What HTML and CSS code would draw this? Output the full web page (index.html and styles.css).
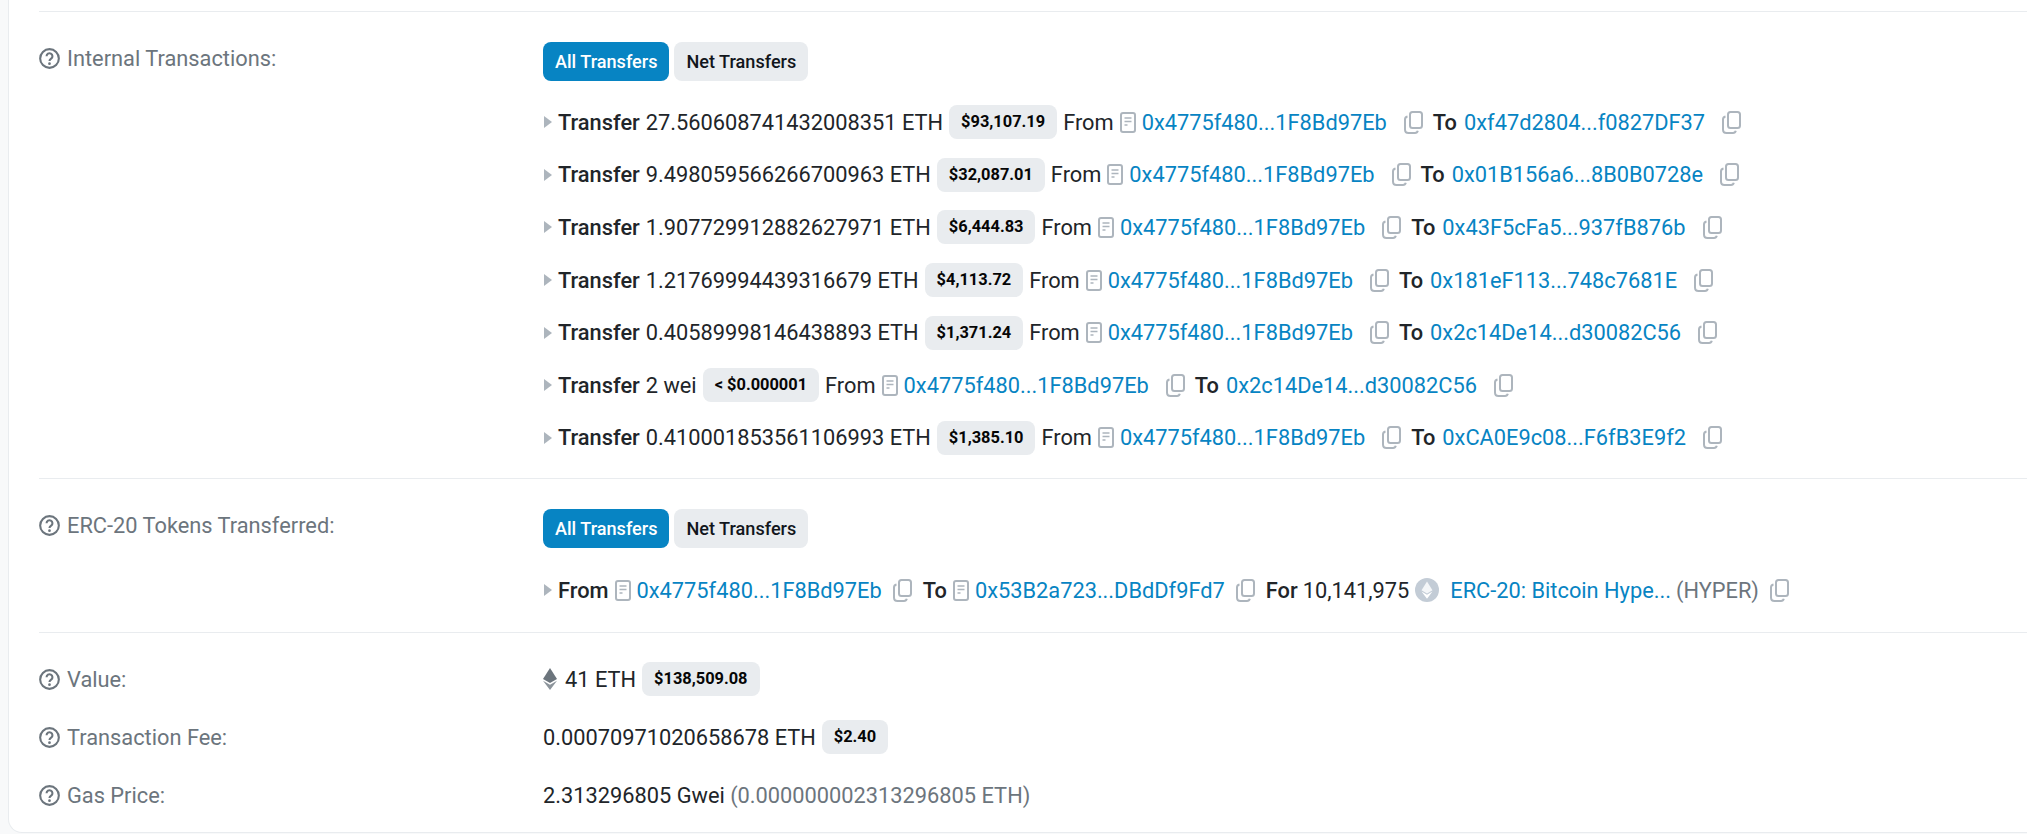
FILE: index.html
```html
<!DOCTYPE html>
<html lang="en">
<head>
  <meta charset="UTF-8" />
  <title>Transaction Details</title>
  <link rel="stylesheet" href="styles.css">
</head>
<body>
  <svg class="sprites" aria-hidden="true">
    <symbol id="i-help" viewBox="0 0 20 20">
      <circle cx="10" cy="10" r="8.9" fill="none" stroke="currentColor" stroke-width="2"/>
      <path d="M7.2 7.800a2.800 2.800 0 1 1 4.400 2.300c-1 .7-1.600 1.100-1.600 2.300" fill="none" stroke="currentColor" stroke-width="2"/>
      <circle cx="10" cy="14.900" r="1.300" fill="currentColor"/>
    </symbol>
    <symbol id="i-doc" viewBox="0 0 16 21">
      <rect x="1" y="1" width="14" height="19" rx="2" fill="none" stroke="currentColor" stroke-width="2"/>
      <path d="M4.500 6h7M4.500 9.500h7M4.500 13h3" fill="none" stroke="currentColor" stroke-width="1.500"/>
    </symbol>
    <symbol id="i-copy" viewBox="0 0 19 23">
      <rect x="6" y="1" width="12" height="16" rx="2.500" fill="none" stroke="currentColor" stroke-width="2"/>
      <path d="M3.500 5.500C2 5.800 1 6.800 1 8.500v10C1 20.500 2.500 22 4.500 22h6.500c1.500 0 2.500-1 2.800-2.200" fill="none" stroke="currentColor" stroke-width="2"/>
    </symbol>
    <symbol id="i-eth" viewBox="0 0 14 22">
      <path d="M7 0l7 11-7 4-7-4z" fill="#6c757d"/>
      <path d="M0 12.700l7 4 7-4-7 9.300z" fill="#8c949b"/>
    </symbol>
    <symbol id="i-token" viewBox="0 0 24 24">
      <circle cx="12" cy="12" r="12" fill="#c3ccd6"/>
      <path d="M12 3.500l5.500 8.700-5.500 3.200-5.500-3.200z" fill="#f4f6f8"/>
      <path d="M6.500 13.500l5.500 3.200 5.500-3.200-5.500 7.300z" fill="#ffffff"/>
    </symbol>
  </svg>

  <main class="card">
    <section class="row row-internal">
      <div class="label"><svg class="help"><use href="#i-help"/></svg>Internal Transactions:</div>
      <div class="value">
        <div class="tabs">
          <span class="tab active">All Transfers</span>
          <span class="tab">Net Transfers</span>
        </div>
        <ul class="transfers">
          <li><i class="caret"></i><b>Transfer</b><span class="qty">27.560608741432008351 ETH</span><span class="usd">$93,107.19</span><span>From</span><svg class="doc"><use href="#i-doc"/></svg><a href="#">0x4775f480...1F8Bd97Eb</a><svg class="copy"><use href="#i-copy"/></svg><b class="to">To</b><a href="#">0xf47d2804...f0827DF37</a><svg class="copy"><use href="#i-copy"/></svg></li>
          <li><i class="caret"></i><b>Transfer</b><span class="qty">9.498059566266700963 ETH</span><span class="usd">$32,087.01</span><span>From</span><svg class="doc"><use href="#i-doc"/></svg><a href="#">0x4775f480...1F8Bd97Eb</a><svg class="copy"><use href="#i-copy"/></svg><b class="to">To</b><a href="#">0x01B156a6...8B0B0728e</a><svg class="copy"><use href="#i-copy"/></svg></li>
          <li><i class="caret"></i><b>Transfer</b><span class="qty">1.907729912882627971 ETH</span><span class="usd">$6,444.83</span><span>From</span><svg class="doc"><use href="#i-doc"/></svg><a href="#">0x4775f480...1F8Bd97Eb</a><svg class="copy"><use href="#i-copy"/></svg><b class="to">To</b><a href="#">0x43F5cFa5...937fB876b</a><svg class="copy"><use href="#i-copy"/></svg></li>
          <li><i class="caret"></i><b>Transfer</b><span class="qty">1.21769994439316679 ETH</span><span class="usd">$4,113.72</span><span>From</span><svg class="doc"><use href="#i-doc"/></svg><a href="#">0x4775f480...1F8Bd97Eb</a><svg class="copy"><use href="#i-copy"/></svg><b class="to">To</b><a href="#">0x181eF113...748c7681E</a><svg class="copy"><use href="#i-copy"/></svg></li>
          <li><i class="caret"></i><b>Transfer</b><span class="qty">0.40589998146438893 ETH</span><span class="usd">$1,371.24</span><span>From</span><svg class="doc"><use href="#i-doc"/></svg><a href="#">0x4775f480...1F8Bd97Eb</a><svg class="copy"><use href="#i-copy"/></svg><b class="to">To</b><a href="#">0x2c14De14...d30082C56</a><svg class="copy"><use href="#i-copy"/></svg></li>
          <li><i class="caret"></i><b>Transfer</b><span class="qty">2 wei</span><span class="usd">&lt; $0.000001</span><span>From</span><svg class="doc"><use href="#i-doc"/></svg><a href="#">0x4775f480...1F8Bd97Eb</a><svg class="copy"><use href="#i-copy"/></svg><b class="to">To</b><a href="#">0x2c14De14...d30082C56</a><svg class="copy"><use href="#i-copy"/></svg></li>
          <li><i class="caret"></i><b>Transfer</b><span class="qty">0.410001853561106993 ETH</span><span class="usd">$1,385.10</span><span>From</span><svg class="doc"><use href="#i-doc"/></svg><a href="#">0x4775f480...1F8Bd97Eb</a><svg class="copy"><use href="#i-copy"/></svg><b class="to">To</b><a href="#">0xCA0E9c08...F6fB3E9f2</a><svg class="copy"><use href="#i-copy"/></svg></li>
        </ul>
      </div>
    </section>

    <section class="row row-tokens">
      <div class="label"><svg class="help"><use href="#i-help"/></svg>ERC-20 Tokens Transferred:</div>
      <div class="value">
        <div class="tabs">
          <span class="tab active">All Transfers</span>
          <span class="tab">Net Transfers</span>
        </div>
        <ul class="transfers">
          <li><i class="caret"></i><b>From</b><svg class="doc"><use href="#i-doc"/></svg><a href="#">0x4775f480...1F8Bd97Eb</a><svg class="copy copy-near"><use href="#i-copy"/></svg><b>To</b><svg class="doc"><use href="#i-doc"/></svg><a href="#">0x53B2a723...DBdDf9Fd7</a><svg class="copy copy-near"><use href="#i-copy"/></svg><b class="for">For</b><span>10,141,975</span><svg class="token"><use href="#i-token"/></svg><a href="#">ERC-20: Bitcoin Hype...</a><span class="muted symbol">(HYPER)</span><svg class="copy copy-near"><use href="#i-copy"/></svg></li>
        </ul>
      </div>
    </section>

    <section class="row row-plain">
      <div class="label"><svg class="help"><use href="#i-help"/></svg>Value:</div>
      <div class="line"><svg class="eth"><use href="#i-eth"/></svg><span>41 ETH</span><span class="usd">$138,509.08</span></div>
      <div class="label"><svg class="help"><use href="#i-help"/></svg>Transaction Fee:</div>
      <div class="line"><span>0.00070971020658678 ETH</span><span class="usd">$2.40</span></div>
      <div class="label"><svg class="help"><use href="#i-help"/></svg>Gas Price:</div>
      <div class="line"><span>2.313296805 Gwei <span class="muted">(0.000000002313296805 ETH)</span></span></div>
    </section>
  </main>
</body>
</html>
```

FILE: styles.css
```css
body {
  margin: 0;
  background-color: #f8f9fa;
  font-family: Roboto, "Liberation Sans", sans-serif;
  font-size: 21.8px;
  color: #212529;
}
.sprites {
  display: none;
}
.card {
  margin-left: 8px;
  height: 833px;
  box-sizing: border-box;
  padding: 11px 0 0 30px;
  background: white;
  border-left: 1px solid #e9ecef;
  border-bottom: 1px solid #e9ecef;
  border-bottom-left-radius: 14px;
}
.row {
  display: grid;
  grid-template-columns: 504px 1fr;
  border-top: 1px solid #e9ecef;
}
.row-internal {
  height: 467px;
  padding-top: 30px;
  box-sizing: border-box;
}
.row-tokens {
  height: 154px;
  padding-top: 30px;
  box-sizing: border-box;
}
.row-tokens .transfers {
  margin-top: 16px;
}
.row-plain {
  padding-top: 17px;
  grid-auto-rows: 58px;
  align-items: center;
}
.label {
  display: flex;
  align-items: center;
  gap: 7px;
  color: #6c757d;
  height: 33px;
}
.help {
  width: 21px;
  height: 21px;
  color: #6c757d;
}
.tabs {
  display: flex;
  gap: 5px;
}
.tab {
  padding: 0 12px;
  height: 39px;
  line-height: 39px;
  border-radius: 8px;
  background: #e9ecef;
  font-size: 18.1px;
  font-weight: 500;
  color: #12161c;
}
.tab.active {
  background: #0784c3;
  color: white;
}
.transfers {
  list-style: none;
  margin: 15px 0 0;
  padding: 0;
}
.transfers li, .line {
  display: flex;
  align-items: center;
  white-space: pre;
}
.transfers li {
  height: 52.6px;
}
.transfers b {
  font-weight: 500;
}
.qty {
  margin-left: 6px;
}
.caret {
  width: 0;
  height: 0;
  margin: 0 6px 0 1px;
  border-left: 8px solid #adb5bd;
  border-top: 6.5px solid transparent;
  border-bottom: 6.5px solid transparent;
}
.usd {
  margin: 0 6px;
  padding: 0 12px;
  height: 34px;
  line-height: 34px;
  border-radius: 8px;
  background: #e9ecef;
  font-size: 16.4px;
  font-weight: 700;
  color: #060606;
}
a {
  color: #0784c3;
  text-decoration: none;
}
.muted {
  color: #6c757d;
}
.doc {
  width: 16px;
  height: 21px;
  margin: 0 6px;
  color: #adb5bd;
}
.copy {
  width: 19px;
  height: 23px;
  margin: 0 10px 0 17px;
  color: #adb5bd;
}
.copy-near {
  margin: 0 11px;
}
.to {
  margin-right: 7px;
}
.for {
  margin-right: 5px;
}
.token {
  width: 24px;
  height: 24px;
  margin: 0 11px 0 6px;
}
.symbol {
  margin-left: 5px;
}
.eth {
  width: 14px;
  height: 22px;
  margin-right: 8px;
}
```
